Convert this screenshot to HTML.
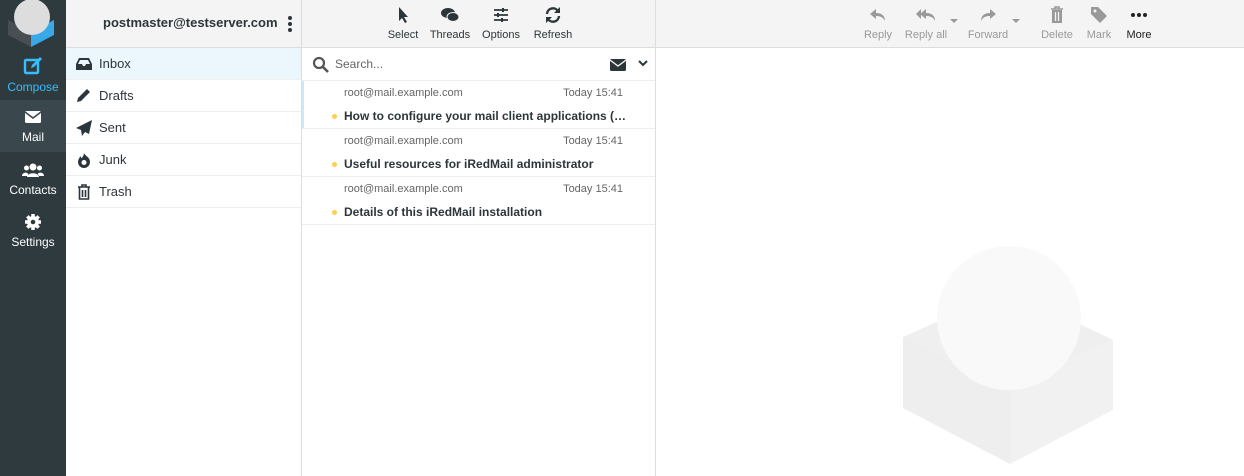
<!DOCTYPE html>
<html><head><meta charset="utf-8"><style>
*{box-sizing:border-box;margin:0;padding:0}
body{width:1244px;height:476px;overflow:hidden;font-family:"Liberation Sans",Roboto,sans-serif;background:#fff;position:relative;color:#2c363a}
.side{position:absolute;left:0;top:0;width:66px;height:476px;background:#2f3a3f}
.nav{position:absolute;left:0;width:66px;height:52px;text-align:center;color:#fff;font-size:12px}
.nav svg{display:block;margin:8px auto 4px}
.fp{position:absolute;left:66px;top:0;width:236px;height:476px;border-right:1px solid #ddd}
.hdr{height:48px;background:#f4f4f4;border-bottom:1px solid #ddd}
.f{height:32px;border-bottom:1px solid #eee;font-size:13px;line-height:32px;padding-left:33px;position:relative}
.f svg{position:absolute;left:9px;top:8px}
.ml{position:absolute;left:302px;top:0;width:354px;height:476px;border-right:1px solid #ddd}
.tb{height:48px;background:#f4f4f4;border-bottom:1px solid #ddd;position:relative}
.btn{position:absolute;top:0;text-align:center;font-size:11px;color:#2c363a}
.btn svg{display:block;margin:6px auto 5px}
.msg{height:48px;border-bottom:1px solid #eee;position:relative}
.fr{position:absolute;left:42px;top:6px;font-size:11px;color:#666}
.dt{position:absolute;right:32px;top:6px;font-size:11px;color:#666}
.sb{position:absolute;left:42px;top:28px;font-size:12px;font-weight:bold;color:#2c363a}
.dot{position:absolute;left:30px;top:33px;width:5px;height:5px;border-radius:50%;background:#ffce4e}
.rp{position:absolute;left:656px;top:0;width:588px;height:476px}
</style></head><body>
<div class="side">
 <svg width="66" height="48" viewBox="0 0 66 48"><polygon points="8,20 31,32 31,47 8,35" fill="#474f53"/><polygon points="31,32 54,20 54,35 31,47" fill="#37a8e8"/><circle cx="32" cy="17" r="18" fill="#ddd"/></svg>
 <div class="nav" style="top:48px;color:#37beff"><svg width="20" height="20" viewBox="0 0 20 20"><rect x="2" y="4" width="13" height="13" fill="none" stroke="#37beff" stroke-width="2.4" rx="1"/><path d="M8 12l1-3 8-8 2 2-8 8z" fill="#37beff"/></svg>Compose</div>
 <div class="nav" style="top:100px;background:#3a474d"><svg width="18" height="18" viewBox="0 0 18 18"><rect x="1" y="3" width="16" height="12" rx="1.5" fill="#fff"/><path d="M1 4l8 6 8-6" stroke="#3a474d" stroke-width="1.5" fill="none"/></svg>Mail</div>
 <div class="nav" style="top:153px"><svg width="22" height="18" viewBox="0 0 22 18"><circle cx="11" cy="6" r="3.5" fill="#fff"/><circle cx="4.5" cy="7" r="2.5" fill="#fff"/><circle cx="17.5" cy="7" r="2.5" fill="#fff"/><path d="M5 16c0-5 12-5 12 0z M0 15c0-4 6-4 6-2v2z M22 15c0-4-6-4-6-2v2z" fill="#fff"/></svg>Contacts</div>
 <div class="nav" style="top:205px"><svg width="18" height="18" viewBox="0 0 18 18"><circle cx="9" cy="9" r="6" fill="#fff"/><g stroke="#fff" stroke-width="3.5"><path d="M9 1v16M1 9h16M3.3 3.3l11.4 11.4M14.7 3.3L3.3 14.7"/></g><circle cx="9" cy="9" r="2.3" fill="#2f3a3f"/></svg>Settings</div>
</div>
<div class="fp">
 <div class="hdr"><div style="position:absolute;left:37px;top:15px;font-weight:bold;font-size:13px">postmaster@testserver.com</div>
 <svg style="position:absolute;left:221px;top:15px" width="6" height="18"><circle cx="3" cy="3" r="2" fill="#2c363a"/><circle cx="3" cy="9" r="2" fill="#2c363a"/><circle cx="3" cy="15" r="2" fill="#2c363a"/></svg></div>
 <div class="f" style="background:#ebf6fd"><svg width="18" height="16" viewBox="0 0 18 16"><path d="M1 8l3-6h10l3 6v6H1z" fill="#2c363a"/><path d="M3 8l2-4h8l2 4h-4l-1 2h-2l-1-2z" fill="#ebf6fd"/></svg>Inbox</div>
 <div class="f"><svg width="18" height="16" viewBox="0 0 18 16"><path d="M2 14l1-4 9-9 3 3-9 9z" fill="#2c363a"/></svg>Drafts</div>
 <div class="f"><svg width="18" height="16" viewBox="0 0 18 16"><path d="M17 0L1 8l5 2 1 6 3-4 4 2z" fill="#2c363a"/></svg>Sent</div>
 <div class="f"><svg width="18" height="16" viewBox="0 0 18 16"><path d="M9 1c1 3 6 4 6 9a6 6 0 01-12 0c0-3 2-4 2-6 1 1 1 2 2 2 1-2 2-3 2-5z" fill="#2c363a"/><circle cx="9" cy="10.5" r="2.5" fill="#fff"/></svg>Junk</div>
 <div class="f"><svg width="18" height="16" viewBox="0 0 18 16"><path d="M3 3h12M7 3V1h4v2M4.5 3.5v11.5h9V3.5M7.5 6v7M10.5 6v7" stroke="#2c363a" stroke-width="1.6" fill="none"/></svg>Trash</div>
</div>
<div class="ml">
 <div class="tb">
  <div class="btn" style="left:84px;width:34px"><svg width="18" height="18" viewBox="0 0 18 18"><path d="M5 1v14l3-3 3 5 2-1-3-5h4z" fill="#2c363a"/></svg>Select</div>
  <div class="btn" style="left:126px;width:44px"><svg width="20" height="18" viewBox="0 0 20 18"><ellipse cx="8" cy="7" rx="7" ry="5" fill="#2c363a"/><ellipse cx="13" cy="11" rx="6" ry="4.5" fill="#2c363a" stroke="#f4f4f4" stroke-width="1"/></svg>Threads</div>
  <div class="btn" style="left:178px;width:42px"><svg width="18" height="18" viewBox="0 0 18 18"><path d="M2 4h14M2 9h14M2 14h14" stroke="#2c363a" stroke-width="1.8"/><rect x="10" y="2" width="2" height="4" fill="#2c363a"/><rect x="5" y="7" width="2" height="4" fill="#2c363a"/><rect x="9" y="12" width="2" height="4" fill="#2c363a"/></svg>Options</div>
  <div class="btn" style="left:229px;width:44px"><svg width="18" height="18" viewBox="0 0 18 18"><path d="M3 8a6 6 0 0111-3M15 10a6 6 0 01-11 3" stroke="#2c363a" stroke-width="2.4" fill="none"/><path d="M16 1v6h-6zM2 17v-6h6z" fill="#2c363a"/></svg>Refresh</div>
 </div>
 <div style="height:33px;border-bottom:1px solid #eee;position:relative">
  <svg style="position:absolute;left:10px;top:8px" width="18" height="18" viewBox="0 0 18 18"><circle cx="7" cy="7" r="5" stroke="#555" stroke-width="2.2" fill="none"/><path d="M11 11l5 5" stroke="#555" stroke-width="2.6"/></svg>
  <div style="position:absolute;left:33px;top:9px;font-size:12px;color:#666">Search...</div>
  <svg style="position:absolute;left:308px;top:10px" width="16" height="14" viewBox="0 0 16 14"><rect x="0" y="1" width="16" height="12" rx="1.5" fill="#2c363a"/><path d="M0 2l8 6 8-6" stroke="#f4f4f4" stroke-width="1.3" fill="none"/></svg>
  <svg style="position:absolute;left:336px;top:12px" width="10" height="8"><path d="M1 1l4 4 4-4" stroke="#2c363a" stroke-width="2" fill="none"/></svg>
 </div>
 <div class="msg" style="box-shadow:inset 2px 0 0 #cde8f6"><div class="fr">root@mail.example.com</div><div class="dt">Today 15:41</div><div class="dot"></div><div class="sb">How to configure your mail client applications (…</div></div>
 <div class="msg"><div class="fr">root@mail.example.com</div><div class="dt">Today 15:41</div><div class="dot"></div><div class="sb">Useful resources for iRedMail administrator</div></div>
 <div class="msg"><div class="fr">root@mail.example.com</div><div class="dt">Today 15:41</div><div class="dot"></div><div class="sb">Details of this iRedMail installation</div></div>
</div>
<div class="rp">
 <div class="tb">
  <div class="btn" style="left:206px;width:32px;color:#999"><svg width="18" height="18" viewBox="0 0 18 18"><path d="M7 3L1 8l6 5v-3c4 0 7 1 9 5 0-5-3-8-9-8z" fill="#999"/></svg>Reply</div>
  <div class="btn" style="left:248px;width:44px;color:#999"><svg width="20" height="18" viewBox="0 0 20 18"><path d="M5 3L0 8l5 5z" fill="#999"/><path d="M10 3L4 8l6 5v-3c4 0 7 1 9 5 0-5-3-8-9-8z" fill="#999"/></svg>Reply all</div>
  <svg style="position:absolute;left:294px;top:19px" width="8" height="5"><path d="M0 0h8L4 4z" fill="#999"/></svg>
  <div class="btn" style="left:310px;width:44px;color:#999"><svg width="18" height="18" viewBox="0 0 18 18"><path d="M11 3l6 5-6 5v-3c-4 0-7 1-9 5 0-5 3-8 9-8z" fill="#999"/></svg>Forward</div>
  <svg style="position:absolute;left:356px;top:19px" width="8" height="5"><path d="M0 0h8L4 4z" fill="#999"/></svg>
  <div class="btn" style="left:384px;width:34px;color:#999"><svg width="18" height="18" viewBox="0 0 18 18"><path d="M3 3h12M7 3V1h4v2" stroke="#999" stroke-width="1.6" fill="none"/><path d="M4 4h10v13H4z" fill="#999"/><path d="M7.5 6v9M10.5 6v9" stroke="#f4f4f4" stroke-width="1.3"/></svg>Delete</div>
  <div class="btn" style="left:428px;width:30px;color:#999"><svg width="18" height="18" viewBox="0 0 18 18"><path d="M1 1h7l9 9-7 7-9-9z" fill="#999"/><circle cx="5" cy="5" r="1.5" fill="#f4f4f4"/></svg>Mark</div>
  <div class="btn" style="left:468px;width:30px;color:#222"><svg width="18" height="18" viewBox="0 0 18 18"><circle cx="3" cy="9" r="2" fill="#222"/><circle cx="9" cy="9" r="2" fill="#222"/><circle cx="15" cy="9" r="2" fill="#222"/></svg>More</div>
 </div>
 <svg style="position:absolute;left:0;top:0" width="588" height="476" viewBox="656 0 588 476">
  <polygon points="903,337 1009,290 1113,340 1010,388" fill="#efefef"/>
  <polygon points="903,337 1010,388 1010,464 903,408" fill="#eeeeee"/>
  <polygon points="1010,388 1113,340 1113,410 1010,464" fill="#f1f1f1"/>
  <circle cx="1009" cy="318" r="72" fill="#f9f9f9"/>
 </svg>
</div>
</body></html>
